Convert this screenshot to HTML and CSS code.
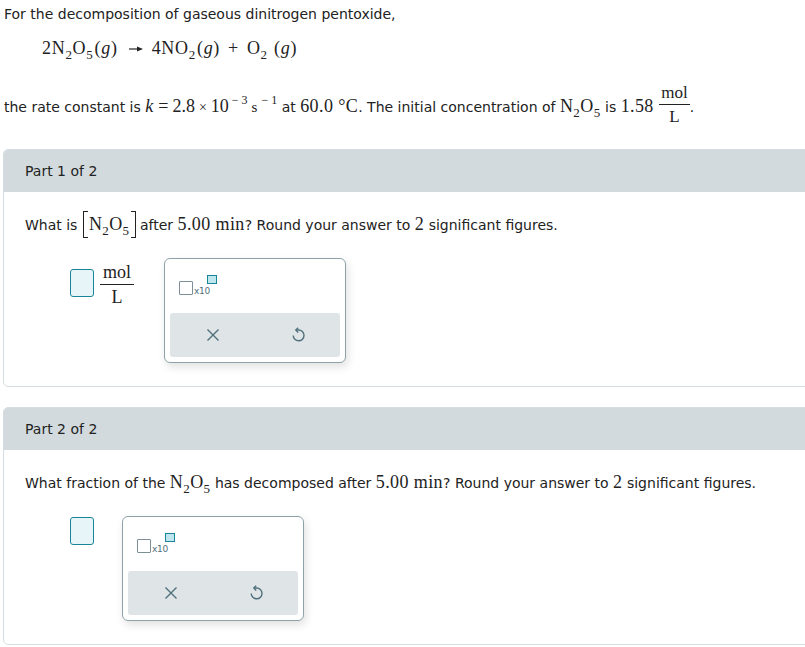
FILE: index.html
```html
<!DOCTYPE html>
<html lang="en">
<head>
<meta charset="utf-8">
<title>Decomposition of N2O5</title>
<link rel="stylesheet" href="styles.css">
</head>
<body>
<div class="page">
  <p class="intro">For the decomposition of gaseous dinitrogen pentoxide,</p>
  <div class="eq">
    <span class="m">2N<sub>2</sub>O<sub>5</sub><span class="par">(<i>g</i>)</span></span>
    <svg class="arrow" width="16" height="8" viewBox="0 0 16 8"><line x1="2" y1="4" x2="11" y2="4" stroke="#222" stroke-width="1.2"/><polygon points="10,1.5 16,4 10,6.5" fill="#222"/></svg>
    <span class="m">4NO<sub>2</sub><span class="par">(<i>g</i>)</span></span>
    <span class="m plus">+</span>
    <span class="m">O<sub>2</sub> <span class="par">(<i>g</i>)</span></span>
  </div>
  <p class="rate">the rate constant is <span class="m k"><i>k</i><span class="op eqs">=</span>2.8<span class="op times">×</span>10<sup class="e1">− 3</sup><span class="unit">s</span><sup class="e2">− 1</sup></span> at <span class="m">60.0 °C</span>. The initial concentration of <span class="m">N<sub>2</sub>O<sub>5</sub></span> is <span class="m">1.58</span> <span class="frac small"><span class="num">mol</span><span class="den">L</span></span>.</p>

  <section class="part">
    <div class="part-head">Part 1 of 2</div>
    <div class="part-body">
      <p class="q">What is <span class="brk"><span class="m">N<sub>2</sub>O<sub>5</sub></span></span> after <span class="m">5.00 min</span>? Round your answer to <span class="m">2</span> significant figures.</p>
      <div class="answer">
        <div class="lead">
          <span class="box"></span>
          <span class="frac"><span class="num">mol</span><span class="den">L</span></span>
        </div>
        <div class="pad">
          <div class="sci"><span class="sq"></span><span class="x10">x10</span><span class="exp"></span></div>
          <div class="tools">
            <svg width="14" height="14" viewBox="0 0 14 14"><path d="M1.5 1.5 L12.5 12.5 M12.5 1.5 L1.5 12.5" stroke="#4f6f7c" stroke-width="1.4" fill="none"/></svg>
            <svg width="14" height="17" viewBox="0 0 14 17"><path d="M5 3 H7.5 A5.4 5.4 0 1 1 2.2 8.5" stroke="#4f6f7c" stroke-width="1.4" fill="none"/><path d="M7.2 0.8 L4.8 3 L7.2 5.6" stroke="#4f6f7c" stroke-width="1.4" fill="none"/></svg>
          </div>
        </div>
      </div>
    </div>
  </section>

  <section class="part">
    <div class="part-head">Part 2 of 2</div>
    <div class="part-body">
      <p class="q">What fraction of the <span class="m">N<sub>2</sub>O<sub>5</sub></span> has decomposed after <span class="m">5.00 min</span>? Round your answer to <span class="m">2</span> significant figures.</p>
      <div class="answer">
        <div class="lead">
          <span class="box"></span>
        </div>
        <div class="pad">
          <div class="sci"><span class="sq"></span><span class="x10">x10</span><span class="exp"></span></div>
          <div class="tools">
            <svg width="14" height="14" viewBox="0 0 14 14"><path d="M1.5 1.5 L12.5 12.5 M12.5 1.5 L1.5 12.5" stroke="#4f6f7c" stroke-width="1.4" fill="none"/></svg>
            <svg width="14" height="17" viewBox="0 0 14 17"><path d="M5 3 H7.5 A5.4 5.4 0 1 1 2.2 8.5" stroke="#4f6f7c" stroke-width="1.4" fill="none"/><path d="M7.2 0.8 L4.8 3 L7.2 5.6" stroke="#4f6f7c" stroke-width="1.4" fill="none"/></svg>
          </div>
        </div>
      </div>
    </div>
  </section>
</div>
</body>
</html>
```

FILE: styles.css
```css
html, body {
  margin: 0;
  padding: 0;
  background: #fff;
  overflow: hidden;
}
body {
  font-family: "DejaVu Sans", Verdana, sans-serif;
  font-size: 14px;
  color: #222;
}
.page {
  padding: 0 0 0 3px;
}
p { margin: 0; }
.intro {
  padding-left: 1px;
  margin-top: 5px;
  line-height: 18px;
}
.m {
  font-family: "Liberation Serif", "Times New Roman", serif;
  font-size: 18px;
  letter-spacing: 0.4px;
  color: #222;
}
.m sub, .m sup {
  font-size: 13px;
  line-height: 0;
}
.m sub { vertical-align: -5px; }
.m sup { vertical-align: 8px; font-size: 12px; }
.par { margin-left: 1px; }
.eq {
  margin: 13px 0 0 39px;
  height: 24px;
  display: flex;
  align-items: center;
  gap: 9px;
}
.eq .m { letter-spacing: 0.7px; }
.eq .plus { margin: 0 -1px; }
.arrow { margin: 2px 0 0 0; }
.rate {
  padding-left: 1px;
  margin-top: 27px;
  line-height: 20px;
}
.k { letter-spacing: 0; }
.op { display: inline-block; }
.eqs { margin: 0 4px 0 5px; }
.times { font-size: 14px; margin: 0 4px 0 4px; }
.k .e1 { margin: 0 4px 0 3px; }
.k .e2 { margin-left: 4px; }
.unit { font-size: 15px; }
.frac {
  display: inline-flex;
  flex-direction: column;
  align-items: center;
  vertical-align: middle;
  font-family: "Liberation Serif", "Times New Roman", serif;
  font-size: 17px;
  line-height: 17px;
}
.frac .num {
  border-bottom: 1.5px solid #222;
  padding: 0 2px 3px;
}
.frac .den { padding-top: 3px; }
.frac.small { margin-left: 1px; position: relative; top: -3px; }

.part {
  margin-top: 21px;
  width: 830px;
  border: 1px solid #d6dde0;
  border-radius: 5px;
  overflow: hidden;
}
.part + .part { margin-top: 20px; }
.part-head {
  background: #d2dadd;
  height: 42px;
  line-height: 42px;
  padding-left: 21px;
}
.part-body {
  padding: 23px 0 23px 21px;
}
.q {
  line-height: 18px;
}
.brk {
  display: inline-block;
  position: relative;
  padding: 0 6px 0 7px;
  height: 18px;
  line-height: 18px;
}
.brk::before, .brk::after {
  content: "";
  position: absolute;
  top: -4px;
  bottom: -5px;
  width: 4px;
  border: 1.5px solid #222;
}
.brk::before { left: 1px; border-right: none; }
.brk::after { right: 0; border-left: none; }

.answer {
  display: flex;
  align-items: flex-start;
  margin-top: 24px;
}
.lead {
  display: flex;
  align-items: center;
  margin-left: 45px;
  margin-right: 27px;
  padding-top: 1px;
  gap: 6px;
}
.lead .box {
  width: 22px;
  height: 26px;
  border: 1.5px solid #1a8599;
  border-radius: 3px;
  background: #e7f5f9;
}
.lead .box:only-child { margin-right: 1px; }
.lead .frac { margin-top: 4px; margin-right: 3px; font-size: 18px; line-height: 18px; }
.lead .frac .num { padding: 0 3px 3px; }
.pad {
  width: 170px;
  border: 1px solid #8fa2a9;
  border-radius: 6px;
  box-shadow: 2px 4px 8px rgba(0,0,0,0.12);
  padding: 0 5px 5px;
  background: #fff;
}
.sci {
  height: 54px;
  display: flex;
  align-items: flex-start;
  padding-left: 9px;
}
.sq {
  margin-top: 22px;
  width: 12px;
  height: 12px;
  border: 1.5px solid #7b8f96;
  border-radius: 1px;
}
.x10 {
  margin-top: 27px;
  font-family: "DejaVu Sans", Verdana, sans-serif;
  font-size: 9px;
  color: #4f6f7c;
  margin-left: 1px;
  letter-spacing: -0.3px;
}
.exp {
  margin-top: 16px;
  margin-left: -3px;
  width: 8px;
  height: 7px;
  border: 1.5px solid #1a8599;
  background: #bfe5ef;
}
.tools {
  height: 44px;
  background: #dfe5e7;
  border-radius: 3px;
  display: grid;
  grid-template-columns: 1fr 1fr;
  align-items: center;
  justify-items: center;
}
```
